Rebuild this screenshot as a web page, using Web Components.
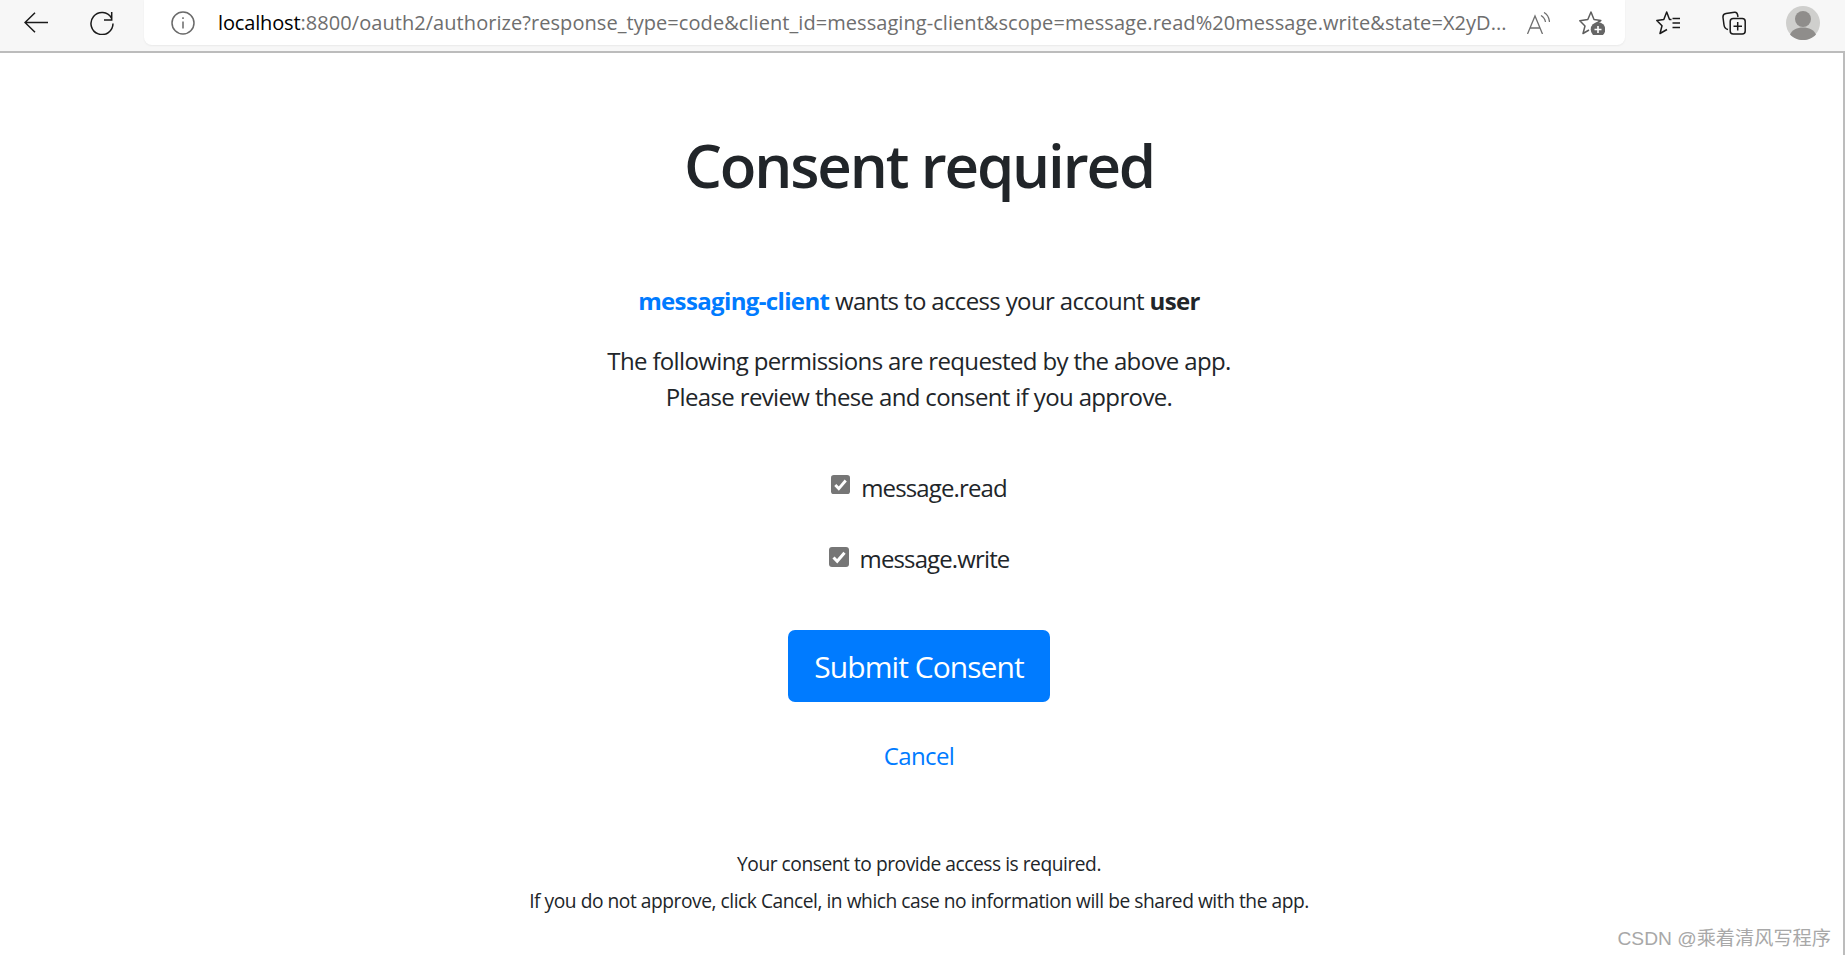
<!DOCTYPE html>
<html lang="en">
<head>
<meta charset="utf-8">
<title>Consent required</title>
<style>
  html, body { margin: 0; height: 100%; background: #fff; }
  body { font-family: "Open Sans", "Noto Sans CJK SC", sans-serif; overflow: hidden; }
</style>
</head>
<body>
<browser-toolbar url-host="localhost" url-rest=":8800/oauth2/authorize?response_type=code&amp;client_id=messaging-client&amp;scope=message.read%20message.write&amp;state=X2yD..."></browser-toolbar>
<consent-page>
  <h1 slot="title">Consent required</h1>
  <span slot="client">messaging-client</span>
  <span slot="account">user</span>
  <scope-check slot="scopes" nudge="small">message.read</scope-check>
  <scope-check slot="scopes">message.write</scope-check>
</consent-page>
<csdn-mark>CSDN @乘着清风写程序</csdn-mark>

<script>
// browser chrome along the top
const toolbarTpl = document.createElement('template');
toolbarTpl.innerHTML = /*html*/`
  <style>
    :host { display: flex; align-items: flex-start; height: 51px; background: #f7f7f7; border-bottom: 2px solid #bcbcbc; }
    svg { display: block; flex: none; fill: none; stroke: #1a1a1a; stroke-width: 1.5; }
    .nav, .tools { display: flex; height: 45px; align-items: center; flex: none; }
    .nav { width: 144px; }
    .back { margin-left: 24px; }
    .reload { margin-left: 42px; }
    .bar { flex: none; width: 1481px; height: 45px; background: #fff; border-radius: 0 0 8px 8px; display: flex; align-items: center; box-shadow: 0 1px 2px rgba(0,0,0,.06); }
    .info { margin-left: 27px; stroke: #6a6a6a; }
    .url { margin-left: 23px; width: 1300px; flex: none; white-space: nowrap; overflow: hidden; font: 20px/28px "Open Sans", sans-serif; letter-spacing: 0.06px; color: #6e6e6e; }
    .url b { font-weight: 400; color: #000; letter-spacing: -0.15px; }
    .read { margin-left: 9px; stroke: #6f6f6f; stroke-width: 1.3; }
    .fav { margin-left: 29px; stroke: #5e5e5e; }
    .t1 { margin-left: 31px; }
    .t2 { margin-left: 42px; }
    .avatar { margin-left: 40px; stroke: none; }
  </style>
  <div class="nav">
    <svg class="back" width="24" height="21" viewBox="0 0 24 21"><path d="M24 10.500H1M11 .7 1 10.500l10 9.800"/></svg>
    <svg class="reload" width="24" height="24" viewBox="0 0 24 24"><path d="M21.500 7A11 11 0 1 0 23 12.500"/><path d="M21.700 1v8H14"/></svg>
  </div>
  <div class="bar">
    <svg class="info" width="24" height="24" viewBox="0 0 24 24"><circle cx="12" cy="12" r="11"/><path d="M12 10.500v7M12 6.200v1.800"/></svg>
    <div class="url"><b id="host"></b><span id="rest"></span></div>
    <svg class="read" width="23" height="22" viewBox="0 0 23 22"><path d="M.5 22 8 4l7.500 18M3.200 16H13"/><path d="M14 3.500C16.500 5 18 7 18.500 10M17 .5C20 2 22 5.500 22.500 10"/></svg>
    <svg class="fav" width="26" height="24" viewBox="0 0 26 24"><path d="M16.500 13 21.800 9.500 15 8.500 12 1 8.800 8.500 .8 9.800 6 15 4 22.500 10 19" stroke-linejoin="round"/><circle cx="19" cy="18.500" r="7.300" fill="#666" stroke="none"/><path d="M19 15v7M15.500 18.500h7" stroke="#fff" stroke-width="1.600"/></svg>
  </div>
  <div class="tools">
    <svg class="t1" width="24" height="24" viewBox="0 0 24 24"><path d="M15.500 8.500H13.500L10.700 1 7.800 8.500 .8 9.500 6 14.800 4 22.500 11 18.500" stroke-linejoin="round"/><path d="M16.500 7.500H24M16.500 12H24M16.500 16.500H24" stroke-width="1.400"/></svg>
    <svg class="t2" width="24" height="24" viewBox="0 0 24 24"><path d="M16 6 15.500 3.500C15.200 2 14 1 12.500 1.200L4 2.500C2 2.800.8 4.500 1 6.500L2 14C2.300 16 3.500 18 6 18.500"/><rect x="8.200" y="7.500" width="15" height="15.500" rx="3"/><path d="M15.700 11v8.500M11.500 15.300h8.500"/></svg>
    <svg class="avatar" width="34" height="34" viewBox="0 0 34 34"><circle cx="17" cy="17" r="17" fill="#cfcfcd"/><circle cx="17" cy="13" r="8" fill="#8f8d8b"/><path d="M4 28.500C6 24 11 21.500 17 21.500S28 24 30 28.500C27 32 22 34 17 34S7 32 4 28.500Z" fill="#8f8d8b"/></svg>
  </div>
`;
class BrowserToolbar extends HTMLElement {
  constructor() {
    super();
    const root = this.attachShadow({ mode: 'open' });
    root.append(toolbarTpl.content.cloneNode(true));
    root.getElementById('host').textContent = this.getAttribute('url-host');
    root.getElementById('rest').textContent = this.getAttribute('url-rest');
  }
}
customElements.define('browser-toolbar', BrowserToolbar);

// one ticked scope row
const scopeTpl = document.createElement('template');
scopeTpl.innerHTML = /*html*/`
  <style>
    :host { display: flex; justify-content: center; align-items: center; height: 36px; font-size: 24px; color: #212529; letter-spacing: -0.87px; }
    svg { display: block; flex: none; margin: -4px 11px 0 0; }
    :host([nudge="small"]) svg { width: 19px; height: 19px; margin: -7px 11px 0 0; }
  </style>
  <svg width="20" height="20" viewBox="0 0 20 20"><rect width="20" height="20" rx="3" fill="#767676"/><path d="M4.500 10.500 8.200 14.300 15.500 5.800" fill="none" stroke="#fff" stroke-width="3"/></svg>
  <span><slot></slot></span>
`;
class ScopeCheck extends HTMLElement {
  constructor() {
    super();
    this.attachShadow({ mode: 'open' }).append(scopeTpl.content.cloneNode(true));
  }
}
customElements.define('scope-check', ScopeCheck);

// page body
const pageTpl = document.createElement('template');
pageTpl.innerHTML = /*html*/`
  <style>
    :host { display: block; padding: 76px 5px 0 0; height: 826px; border-right: 2px solid #bcbcbc; text-align: center; color: #212529; font-size: 24px; line-height: 36px; letter-spacing: -0.64px; }
    ::slotted(h1) { margin: 0 0 82px; font-size: 60px; line-height: 72px; font-weight: 600; letter-spacing: -2.15px; }
    p { margin: 0 0 24px; }
    .client { font-weight: 700; color: #007bff; }
    .account { font-weight: 700; }
    .scopes { display: flex; flex-direction: column; gap: 35px; margin-top: 55px; }
    .submit { display: block; box-sizing: border-box; margin: 53px auto 0; width: 262px; height: 72px; border: 0; border-radius: 7px; background: #007bff; color: #fff; font: 30px/45px "Open Sans", sans-serif; letter-spacing: -0.95px; }
    .cancel { display: block; margin-top: 36px; color: #007bff; text-decoration: none; }
    small { display: block; margin-top: 72px; font-size: 19.200px; line-height: 36.500px; letter-spacing: -0.46px; }
  </style>
  <slot name="title"></slot>
  <p><span class="client"><slot name="client"></slot></span> wants to access your account <span class="account"><slot name="account"></slot></span></p>
  <p>The following permissions are requested by the above app.<br>Please review these and consent if you approve.</p>
  <div class="scopes"><slot name="scopes"></slot></div>
  <button class="submit">Submit Consent</button>
  <a class="cancel" href="#">Cancel</a>
  <small>Your consent to provide access is required.<br>If you do not approve, click Cancel, in which case no information will be shared with the app.</small>
`;
class ConsentPage extends HTMLElement {
  constructor() {
    super();
    this.attachShadow({ mode: 'open' }).append(pageTpl.content.cloneNode(true));
  }
}
customElements.define('consent-page', ConsentPage);

// blog watermark lies over the page
const markTpl = document.createElement('template');
markTpl.innerHTML = /*html*/`
  <style>
    :host { position: absolute; right: 14px; bottom: 4px; font: 19.200px/24px "Liberation Sans", "Noto Sans CJK SC", sans-serif; color: #a8a8a8; }
  </style>
  <slot></slot>
`;
class CsdnMark extends HTMLElement {
  constructor() {
    super();
    this.attachShadow({ mode: 'open' }).append(markTpl.content.cloneNode(true));
  }
}
customElements.define('csdn-mark', CsdnMark);
</script>
</body>
</html>
